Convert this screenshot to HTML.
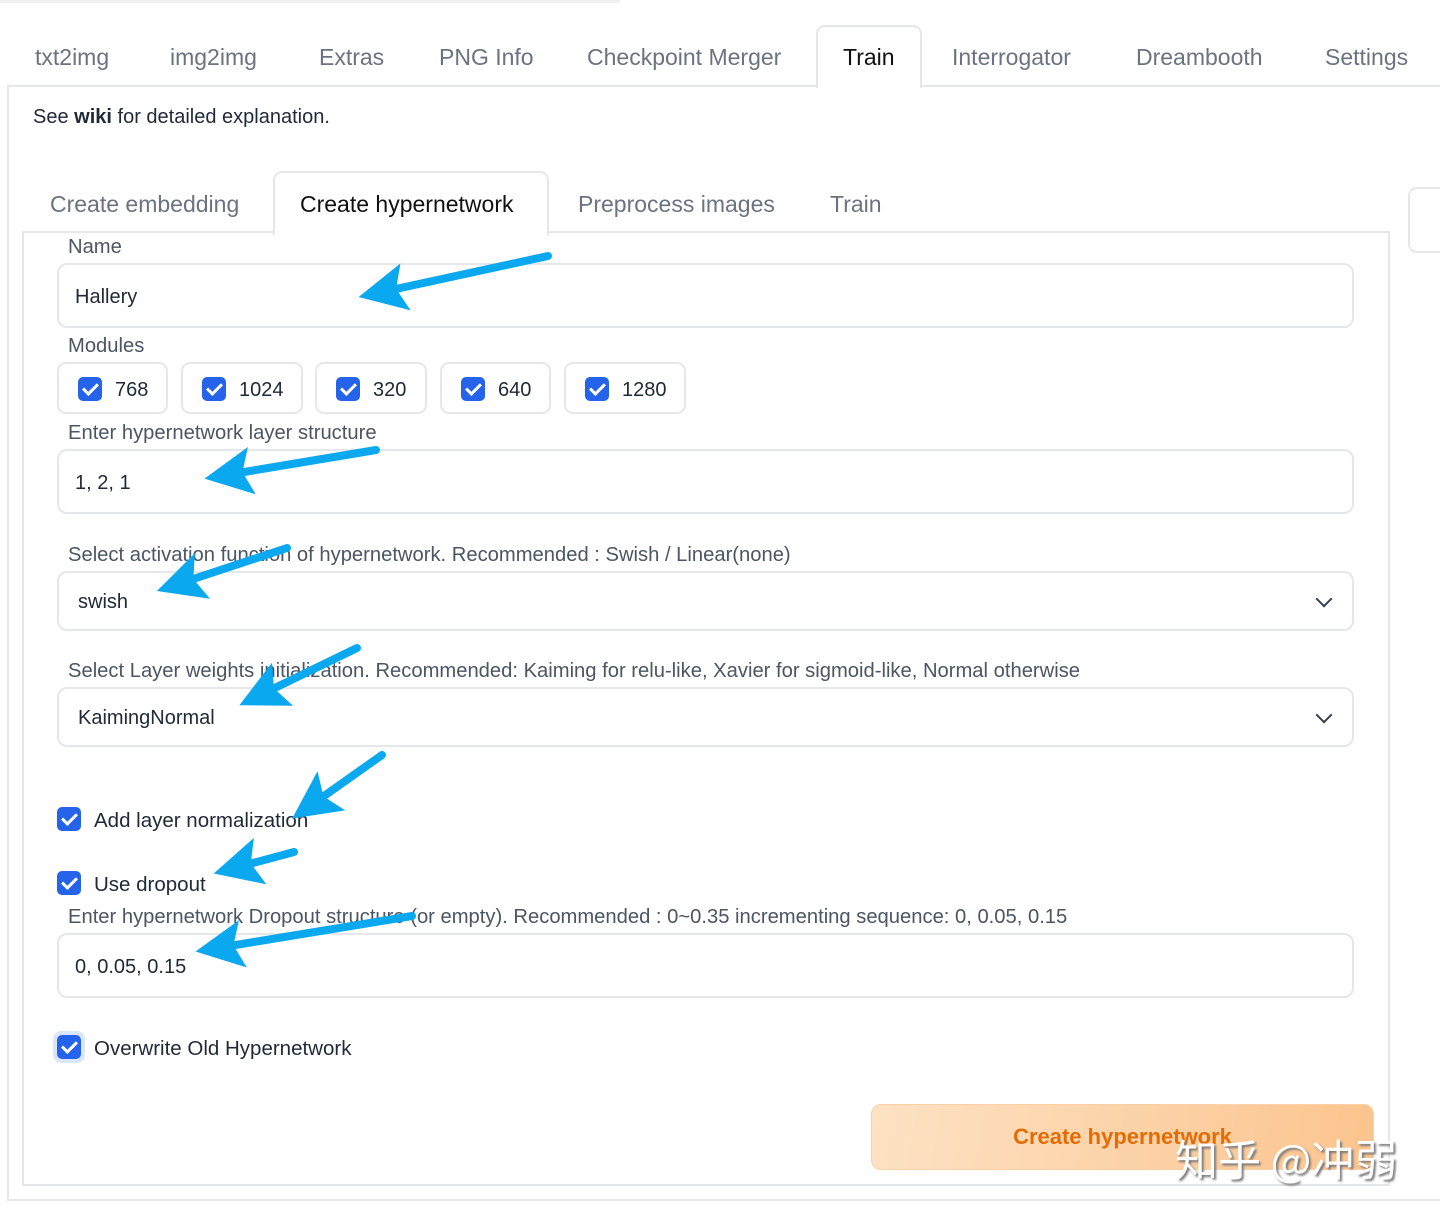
<!DOCTYPE html>
<html><head><meta charset="utf-8"><style>
*{box-sizing:border-box;margin:0;padding:0}
body{width:1440px;height:1220px;background:#fff;font-family:"Liberation Sans","Noto Sans CJK SC",sans-serif;position:relative;overflow:hidden;color:#1f2937}
.a{position:absolute}
.tab{position:absolute;top:41px;font-size:23px;color:#6b7280;line-height:32px}
.stab{position:absolute;top:188px;font-size:23px;color:#6b7280;line-height:32px}
.lbl{position:absolute;left:68px;font-size:20.2px;color:#4b5563;line-height:24px}
.inp{position:absolute;left:57px;width:1297px;border:2px solid #e5e7eb;border-radius:10px;background:#fff;font-size:20px;color:#1f2937;padding-left:16px;display:flex;align-items:center}
.cb{position:absolute;width:24px;height:24px;background:#2563eb;border-radius:5px}
.cb::after{content:"";position:absolute;left:8px;top:3px;width:6px;height:12px;border:solid #fff;border-width:0 3px 3px 0;transform:rotate(45deg)}
.mod{position:absolute;top:362px;height:52px;border:2px solid #e5e7eb;border-radius:9px;background:#fff}
.mod .cb{left:19px;top:13px}
.mod span{position:absolute;left:56px;top:14px;font-size:20px;line-height:24px}
.chev{position:absolute;right:22px;width:12px;height:12px;border:solid #374151;border-width:0 2px 2px 0;transform:rotate(45deg)}
</style></head><body>
<div class="a" style="left:0;top:0;width:620px;height:3px;background:#f0f0f0"></div>
<div class="tab" style="left:35px">txt2img</div>
<div class="tab" style="left:170px">img2img</div>
<div class="tab" style="left:319px">Extras</div>
<div class="tab" style="left:439px">PNG Info</div>
<div class="tab" style="left:587px">Checkpoint Merger</div>
<div class="tab" style="left:952px">Interrogator</div>
<div class="tab" style="left:1136px">Dreambooth</div>
<div class="tab" style="left:1325px">Settings</div>
<div class="a" style="left:7px;top:85px;width:1440px;height:1116px;border:2px solid #e5e7eb"></div>
<div class="a" style="left:816px;top:25px;width:106px;height:63px;border:2px solid #e5e7eb;border-bottom:none;border-radius:9px 9px 0 0;background:#fff"></div>
<div class="tab" style="left:843px;color:#111">Train</div>
<div class="a" style="left:33px;top:104px;font-size:20px;line-height:26px;color:#1f2937">See <b>wiki</b> for detailed explanation.</div>
<div class="a" style="left:22px;top:231px;width:1368px;height:955px;border:2px solid #e5e7eb"></div>
<div class="a" style="left:273px;top:171px;width:276px;height:64px;border:2px solid #e5e7eb;border-bottom:none;border-radius:9px 9px 0 0;background:#fff"></div>
<div class="a" style="left:1408px;top:187px;width:40px;height:66px;border:2px solid #e5e7eb;border-radius:9px"></div>
<div class="stab" style="left:50px">Create embedding</div>
<div class="stab" style="left:300px;color:#111">Create hypernetwork</div>
<div class="stab" style="left:578px">Preprocess images</div>
<div class="stab" style="left:830px">Train</div>

<div class="lbl" style="top:235px">Name</div>
<div class="inp" style="top:263px;height:65px;padding-top:4px">Hallery</div>
<div class="lbl" style="top:334px">Modules</div>
<div class="mod" style="left:57px;width:111px"><div class="cb"></div><span>768</span></div>
<div class="mod" style="left:181px;width:122px"><div class="cb"></div><span>1024</span></div>
<div class="mod" style="left:315px;width:112px"><div class="cb"></div><span>320</span></div>
<div class="mod" style="left:440px;width:111px"><div class="cb"></div><span>640</span></div>
<div class="mod" style="left:564px;width:122px"><div class="cb"></div><span>1280</span></div>
<div class="lbl" style="top:421px">Enter hypernetwork layer structure</div>
<div class="inp" style="top:449px;height:65px;padding-top:4px">1, 2, 1</div>
<div class="lbl" style="top:543px">Select activation function of hypernetwork. Recommended : Swish / Linear(none)</div>
<div class="inp" style="top:571px;height:60px;padding-left:19px;padding-top:2px">swish<div class="chev" style="top:20px"></div></div>
<div class="lbl" style="top:659px">Select Layer weights initialization. Recommended: Kaiming for relu-like, Xavier for sigmoid-like, Normal otherwise</div>
<div class="inp" style="top:687px;height:60px;padding-left:19px;padding-top:2px">KaimingNormal<div class="chev" style="top:20px"></div></div>
<div class="cb" style="left:57px;top:807px"></div>
<div class="a" style="left:94px;top:809px;font-size:20.5px;line-height:24px">Add layer normalization</div>
<div class="cb" style="left:57px;top:871px"></div>
<div class="a" style="left:94px;top:873px;font-size:20.5px;line-height:24px">Use dropout</div>
<div class="lbl" style="top:905px">Enter hypernetwork Dropout structure (or empty). Recommended : 0~0.35 incrementing sequence: 0, 0.05, 0.15</div>
<div class="inp" style="top:933px;height:65px;padding-top:4px">0, 0.05, 0.15</div>
<div class="a" style="left:53px;top:1031px;width:32px;height:32px;border-radius:8px;background:#dbe6fb"></div>
<div class="cb" style="left:57px;top:1035px"></div>
<div class="a" style="left:94px;top:1037px;font-size:20.5px;line-height:24px">Overwrite Old Hypernetwork</div>

<div class="a" style="left:871px;top:1104px;width:503px;height:66px;border-radius:10px;background:linear-gradient(100deg,#fde2c4,#fcc48e);border:1px solid #fbd0a6;color:#e36c04;font-weight:bold;font-size:22px;display:flex;align-items:center;justify-content:center">Create hypernetwork</div>
<div class="a" style="left:1175px;top:1133px;font-size:43px;line-height:50px;color:#fff;text-shadow:2px 2px 2px #777;font-family:'Noto Sans CJK SC',sans-serif">知乎 @冲弱</div>

<svg class="a" style="left:0;top:0" width="1440" height="1220">
<defs><marker id="m" markerWidth="7" markerHeight="6" refX="8" refY="5" orient="auto" viewBox="0 0 10 10"><path d="M0,0 L10,5 L0,10 L2,5 z" fill="#0aa8ee"/></marker></defs>
<g stroke="#0aa8ee" stroke-width="8" stroke-linecap="round" marker-end="url(#m)" fill="none">
<line x1="548" y1="256" x2="368" y2="295"/>
<line x1="376" y1="450" x2="214" y2="477"/>
<line x1="287" y1="548" x2="166" y2="588"/>
<line x1="357" y1="648" x2="248" y2="701"/>
<line x1="382" y1="755" x2="300" y2="813"/>
<line x1="294" y1="852" x2="223" y2="871"/>
<line x1="412" y1="916" x2="205" y2="950"/>
</g></svg>
</body></html>
